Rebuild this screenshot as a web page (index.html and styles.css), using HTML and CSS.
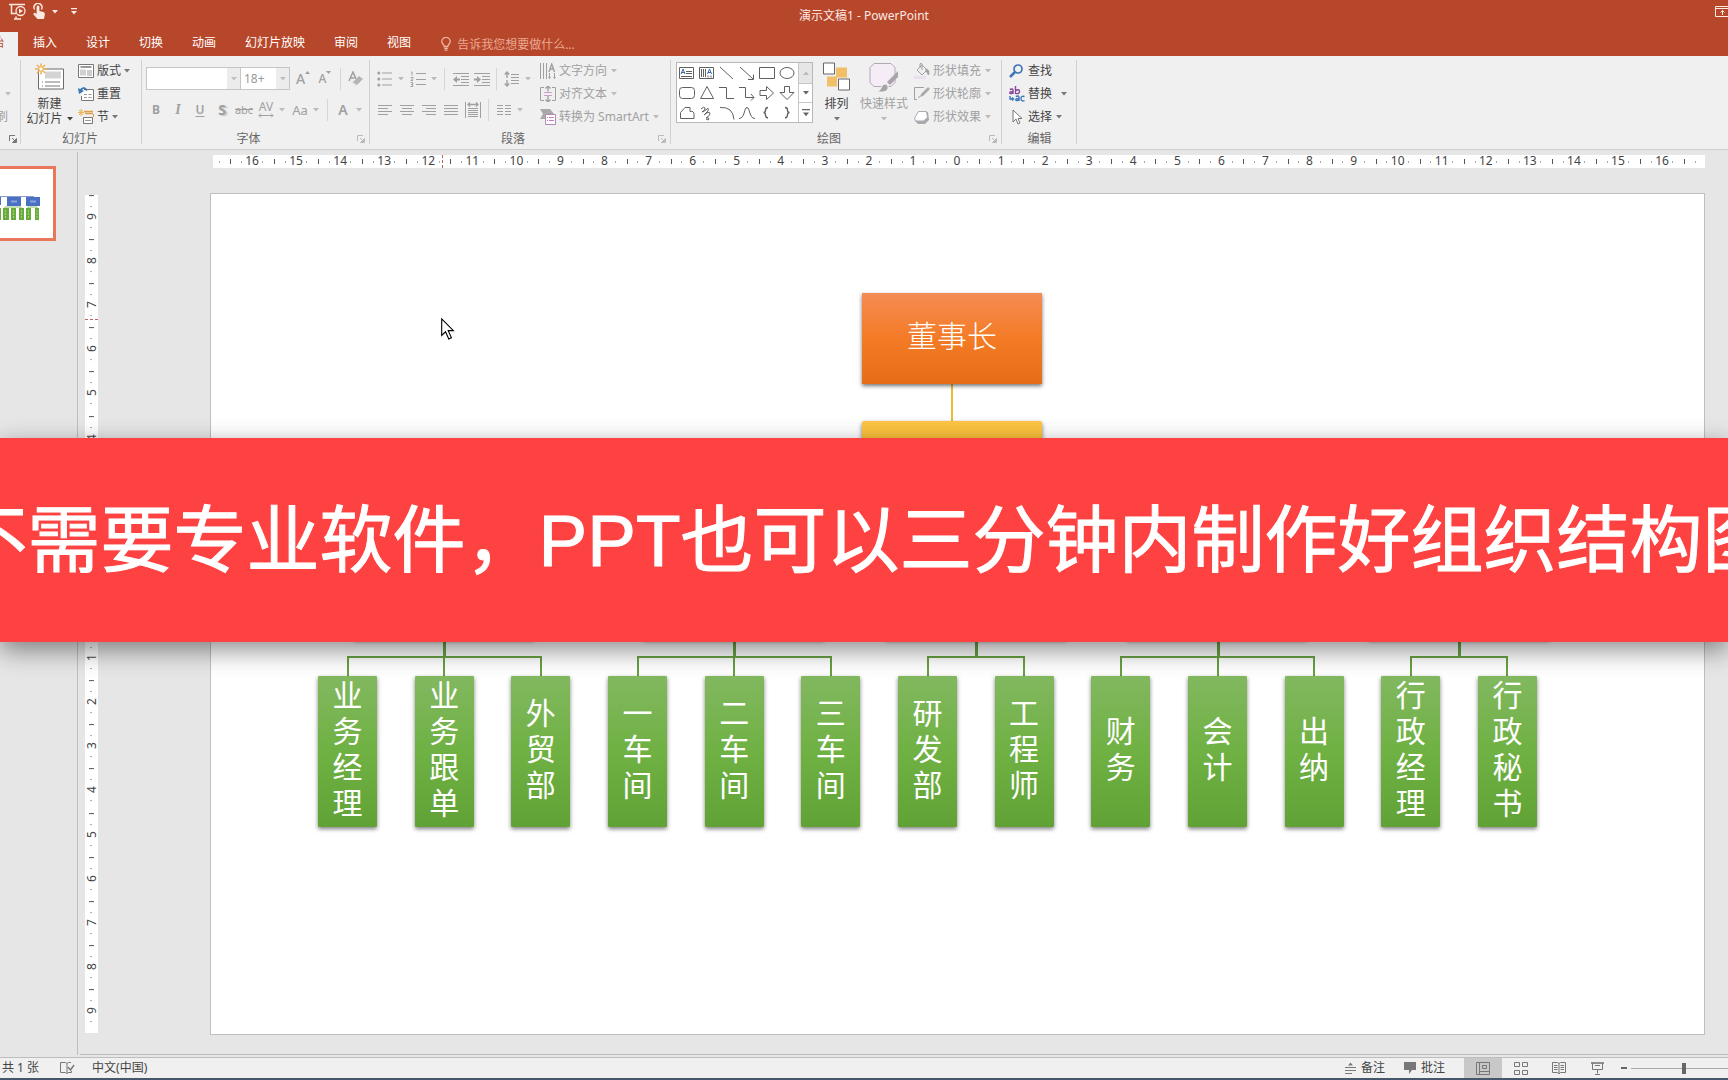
FILE: index.html
```html
<!DOCTYPE html>
<html lang="zh-CN">
<head>
<meta charset="utf-8">
<title>演示文稿1 - PowerPoint</title>
<link rel="stylesheet" href="styles.css">
</head>
<body>
<svg class="defs" aria-hidden="true">
  <symbol id="caret" viewBox="0 0 6 4"><path d="M0 0h6L3 3.5z" fill="currentColor"/></symbol>
  <symbol id="launch" viewBox="0 0 8 8"><path d="M.5 6V.5H6M3 3l3 3M7.500 3.500v4h-4z" fill="none" stroke="currentColor"/><path d="M7.500 3.500v4h-4z" fill="currentColor"/></symbol>
</svg>

<header class="top">
  <div class="titlebar">
    <div class="quick">
      <button class="q show" aria-label="从头开始"><svg width="17" height="17" viewBox="0 0 17 17" fill="none" stroke="currentColor"><path d="M0 1.500h16M2.500 1.500v9H7M5 16h7M7 13.500v2" stroke-width="1.500"/><circle cx="11.500" cy="8" r="4.500" stroke-width="1.300"/><path d="M10 5.500v5l4-2.500z" fill="currentColor" stroke="none"/></svg></button>
      <button class="q touch" aria-label="触摸模式"><svg width="12" height="17" viewBox="0 0 12 17"><path d="M1.600 6.500A4 4 0 1 1 8.400 6.500" fill="none" stroke="currentColor" stroke-width="1.400"/><path d="M3.600 3.500q1.400-1.800 2.800 0V8l4 1q1.600.5 1.500 2.200L11 16H4.500L.3 11.200q.5-1.800 2-1.200l1.300 1z" fill="currentColor"/></svg></button>
      <button class="q more" aria-label="更多触摸选项"><svg width="6" height="4"><use href="#caret"/></svg></button>
      <button class="q more" aria-label="自定义快速访问工具栏"><svg width="6" height="7" viewBox="0 0 6 7"><path d="M0 0h6v1.200H0zM0 3h6L3 6.500z" fill="currentColor"/></svg></button>
    </div>
    <h1 class="title">演示文稿1 - PowerPoint</h1>
    <button class="q options" aria-label="功能区显示选项"><svg width="16" height="11" viewBox="0 0 16 11" fill="none" stroke="currentColor"><path d="M.5.5h15v10H.5zM.5 2.500h15M7.500 9V4.500M5.500 6.500l2-2 2 2"/></svg></button>
  </div>
  <nav class="tabs">
    <button class="tab active">开始</button>
    <button class="tab">插入</button>
    <button class="tab">设计</button>
    <button class="tab">切换</button>
    <button class="tab">动画</button>
    <button class="tab">幻灯片放映</button>
    <button class="tab">审阅</button>
    <button class="tab">视图</button>
    <label class="tell">
      <svg width="10" height="14" viewBox="0 0 10 14" fill="none" stroke="currentColor" stroke-width="1.300"><path d="M3.200 9.500C3.200 7.500.8 7 .8 4.600a4.200 4.200 0 0 1 8.400 0C9.200 7 6.800 7.500 6.800 9.500zM3.200 11.300h3.600M3.500 13.200h3"/></svg>
      <input type="text" placeholder="告诉我您想要做什么..." aria-label="告诉我您想要做什么">
    </label>
  </nav>
</header>

<div class="ribbon">
  <section class="group clip">
    <div class="body stack">
      <span class="line"></span>
      <button class="line off" aria-label="复制"><svg class="c" width="6" height="4"><use href="#caret"/></svg></button>
      <button class="line off">格式刷</button>
    </div>
    <div class="foot"><button class="launcher" aria-label="剪贴板设置"><svg width="8" height="8"><use href="#launch"/></svg></button></div>
  </section>

  <section class="group slides">
    <div class="body">
      <button class="big">
        <svg width="32" height="29" viewBox="0 0 32 29"><path d="M4.500 6.500h25v20h-25z" fill="#fff" stroke="#6b6b6b"/><path d="M11 9h16v7H11z" fill="#d4d4d4"/><path d="M8 19.500h1M11 19.500h15M8 23.500h1M11 23.500h15" stroke="#777"/><path d="M7 1v11M1 6.500h12M3 2.500l8 8M11 2.500l-8 8" stroke="#edb45a" stroke-width="1.600"/><circle cx="7" cy="6.500" r="2.200" fill="#fff" stroke="#edb45a"/></svg>
        <span>新建</span><span class="withcaret">幻灯片<svg width="6" height="4"><use href="#caret"/></svg></span>
      </button>
      <div class="stack">
        <button class="line"><svg class="i" viewBox="0 0 16 16"><path d="M.5 1.500h15v13H.5z" fill="#fff" stroke="#777"/><path d="M2.500 4h11" stroke="#999" stroke-width="2"/><path d="M2 6.500h6v6H2z" fill="#d0d0d0"/><path d="M9 8h5M9 10h5M9 12h5" stroke="#999"/></svg>版式<svg class="c" width="6" height="4"><use href="#caret"/></svg></button>
        <button class="line"><svg class="i" viewBox="0 0 16 16"><path d="M6 3.500h9.500v11h-12V10" fill="#fff" stroke="#777"/><path d="M6 8.500h3M10.500 8.500h3M6 11.500h3M10.500 11.500h3" stroke="#999"/><path d="M9 4.500Q5-.5 2 5" fill="none" stroke="#3b78b0" stroke-width="2"/><path d="M0 2l1 6 5-3z" fill="#3b78b0"/></svg>重置</button>
        <button class="line"><svg class="i" viewBox="0 0 16 16"><path d="M6 2.500h9M15 4.500H7" stroke="#dca04a" stroke-width="1.500"/><path d="M5.500 8.500h9v6h-9z" fill="#fff" stroke="#777"/><path d="M7 11.500h6" stroke="#999"/><path d="M15.500 5v3" stroke="#dca04a"/><path d="M3 0v7M0 3.500h6M1 1l4 5M5 1L1 6" stroke="#edb45a"/></svg>节<svg class="c" width="6" height="4"><use href="#caret"/></svg></button>
      </div>
    </div>
    <div class="foot"><h2>幻灯片</h2></div>
  </section>

  <section class="group font off">
    <div class="body rows">
      <div class="row">
        <div class="combo name"><input type="text" aria-label="字体"><button aria-label="选择字体"><svg width="6" height="4"><use href="#caret"/></svg></button></div>
        <div class="combo size"><input type="text" value="18+" aria-label="字号"><button aria-label="选择字号"><svg width="6" height="4"><use href="#caret"/></svg></button></div>
        <button class="tool grow" aria-label="增大字号">A<svg width="5" height="3" viewBox="0 0 5 3"><path d="M0 3h5L2.500 0z" fill="currentColor"/></svg></button>
        <button class="tool shrink" aria-label="减小字号">A<svg width="5" height="3" viewBox="0 0 5 3"><path d="M0 0h5L2.500 3z" fill="currentColor"/></svg></button>
        <i class="sep"></i>
        <button class="tool" aria-label="清除格式"><svg class="i" viewBox="0 0 16 16"><path d="M1 10L5 1l3 7M2.500 7h4" fill="none" stroke="currentColor" stroke-width="1.500"/><path d="M5 11l6-6 4 3-6 6z" fill="#b5b5b5"/><path d="M4 10.500l4 4" stroke="#ccc"/></svg></button>
      </div>
      <div class="row">
        <button class="tool b">B</button><button class="tool it">I</button><button class="tool u">U</button><button class="tool s">S</button><button class="tool abc">abc</button>
        <button class="tool split av" aria-label="字符间距"><span class="cell">AV<svg width="16" height="5" viewBox="0 0 16 5" fill="none" stroke="currentColor"><path d="M1 2.500h14M3 .5l-2 2 2 2M13 .5l2 2-2 2"/></svg></span><svg class="c" width="6" height="4"><use href="#caret"/></svg></button>
        <button class="tool split aa"><span class="cell">Aa</span><svg class="c" width="6" height="4"><use href="#caret"/></svg></button>
        <i class="sep"></i>
        <button class="tool split color"><span class="cell">A</span><svg class="c" width="6" height="4"><use href="#caret"/></svg></button>
      </div>
    </div>
    <div class="foot"><h2>字体</h2><button class="launcher" aria-label="字体设置"><svg width="8" height="8"><use href="#launch"/></svg></button></div>
  </section>

  <section class="group para off">
    <div class="body">
      <div class="rows">
        <div class="row">
          <button class="tool split" aria-label="项目符号"><span class="cell"><svg class="i" viewBox="0 0 16 16" fill="currentColor"><path d="M5 1.500h10v1H5zM5 7.500h10v1H5zM5 13.500h10v1H5z"/><circle cx="1.800" cy="2" r="1.500"/><circle cx="1.800" cy="8" r="1.500"/><circle cx="1.800" cy="14" r="1.500"/></svg></span><svg class="c" width="6" height="4"><use href="#caret"/></svg></button>
          <button class="tool split" aria-label="编号"><span class="cell"><svg class="i" viewBox="0 0 16 16" fill="none" stroke="currentColor"><path d="M6 2.500h10M6 8.500h10M6 13.500h10M1 1h1v3.500M.5 6.500H3v1.200L.8 9.500H3M.5 11.500h2.200v4H.5M1 13.500h1.500"/></svg></span><svg class="c" width="6" height="4"><use href="#caret"/></svg></button>
          <i class="sep wide"></i>
          <button class="tool" aria-label="减少缩进"><svg class="i" viewBox="0 0 16 16"><path d="M0 2.500h16M8 5.500h8M8 8.500h8M8 11.500h8M0 14.500h16" stroke="currentColor"/><path d="M0 8.500L4 5v2.500h3v2H4V12z" fill="currentColor"/></svg></button>
          <button class="tool" aria-label="增加缩进"><svg class="i" viewBox="0 0 16 16"><path d="M0 2.500h16M8 5.500h8M8 8.500h8M8 11.500h8M0 14.500h16" stroke="currentColor"/><path d="M7 8.500L3 5v2.500H0v2h3V12z" fill="currentColor"/></svg></button>
          <i class="sep"></i>
          <button class="tool split" aria-label="行距"><span class="cell"><svg class="i" viewBox="0 0 16 16" fill="none" stroke="currentColor"><path d="M7 3.500h8M7 6.500h8M7 9.500h8M7 12.500h8"/><path d="M3 7V1M.8 3.500L3 1l2.200 2.500M3 9v6M.8 12.500L3 15l2.200-2.500" stroke-width="1.400"/></svg></span><svg class="c" width="6" height="4"><use href="#caret"/></svg></button>
        </div>
        <div class="row">
          <button class="tool" aria-label="左对齐"><svg class="i" viewBox="0 0 16 16" stroke="currentColor"><path d="M1 3.500h14M1 6.500h10M1 9.500h14M1 12.500h10"/></svg></button>
          <button class="tool" aria-label="居中"><svg class="i" viewBox="0 0 16 16" stroke="currentColor"><path d="M1 3.500h14M3 6.500h10M1 9.500h14M3 12.500h10"/></svg></button>
          <button class="tool" aria-label="右对齐"><svg class="i" viewBox="0 0 16 16" stroke="currentColor"><path d="M1 3.500h14M5 6.500h10M1 9.500h14M5 12.500h10"/></svg></button>
          <button class="tool" aria-label="两端对齐"><svg class="i" viewBox="0 0 16 16" stroke="currentColor"><path d="M1 3.500h14M1 6.500h14M1 9.500h14M1 12.500h14"/></svg></button>
          <button class="tool" aria-label="分散对齐"><svg class="i" viewBox="0 0 16 16" fill="none" stroke="currentColor"><path d="M.5 0v16M15.500 0v16M3 6.500h10M3 8.500h10M3 10.500h10M3 12.500h10M3 14.500h10"/><path d="M3 2.500h10M5 .5l-2 2 2 2M11 .5l2 2-2 2" stroke-width="1.300"/></svg></button>
          <i class="sep"></i>
          <button class="tool split" aria-label="分栏"><span class="cell"><svg class="i" viewBox="0 0 16 16" stroke="currentColor"><path d="M1 3.500h6M1 6.500h6M1 9.500h6M1 12.500h6M9 3.500h6M9 6.500h6M9 9.500h6M9 12.500h6"/></svg></span><svg class="c" width="6" height="4"><use href="#caret"/></svg></button>
        </div>
      </div>
      <div class="stack">
        <button class="line"><svg class="i" viewBox="0 0 16 16" fill="none" stroke="currentColor"><path d="M.5 0v16M3.500 0v16M6.500 0v16M9.500 10v5M14.500 10v5M8.500 14l1 1.500 1-1.500M13.500 14l1 1.500 1-1.500"/><path d="M9 9l2.700-8L14.500 9M10 6h4" stroke-width="1.400"/></svg>文字方向<svg class="c" width="6" height="4"><use href="#caret"/></svg></button>
        <button class="line"><svg class="i" viewBox="0 0 16 16" fill="none" stroke="currentColor"><path d="M4 1.500H.5v13H4M12 1.500h3.500v13H12"/><path d="M8 5.500V0M5.500 2.500L8 0l2.500 2.500M8 10v6M5.500 13.500L8 16l2.500-2.500" stroke-width="1.400"/><path d="M4 6.500h8M4 9.500h8" stroke="#c9a0c9"/></svg>对齐文本<svg class="c" width="6" height="4"><use href="#caret"/></svg></button>
        <button class="line"><svg class="i" viewBox="0 0 16 16"><path d="M0 0h10l4 5H5.500v5H0l3-5z" fill="#a9a9a9"/><path d="M5.500 5.500h10v10h-10z" fill="#fff" stroke="#b08ab0"/><path d="M7 8.500h1M9 8.500h5M7 11.500h1M9 11.500h5" stroke="#c080c0"/></svg>转换为 SmartArt<svg class="c" width="6" height="4"><use href="#caret"/></svg></button>
      </div>
    </div>
    <div class="foot"><h2>段落</h2><button class="launcher" aria-label="段落设置"><svg width="8" height="8"><use href="#launch"/></svg></button></div>
  </section>

  <section class="group draw">
    <div class="body">
      <div class="gallery">
        <svg class="shapes" width="121" height="59" viewBox="0 0 121 59" fill="none" stroke="#606060">
          <path d="M2.500 4.500h14v11h-14zM9 8.500h6M9 10.500h6M4 13.500h11"/><path d="M4 11l2-5 2 5M5 9.500h2.500" stroke="#356ba5"/>
          <path d="M22.500 4.500h14v11h-14zM24.500 6v8M26.500 6v8M28.500 6v8M31 12.500v2M34 12.500v2"/><path d="M30.500 11l2-5 2 5M31 9.500h3" stroke="#356ba5"/>
          <path d="M43 4l13 12M63 4l13 12M76.500 11.500v5H71"/>
          <path d="M82.500 4.500h15v11h-15z"/><ellipse cx="110" cy="10" rx="7" ry="5.500"/>
          <rect x="2.500" y="24.500" width="15" height="11" rx="3"/><path d="M30 23.500l6.500 12h-13z"/>
          <path d="M42 24.500h7.500v11H57M62 24.500h6.500v10H77M74 31l3 3.500-3 3"/>
          <path d="M83 27.500h6.500v-4l7 6.500-7 6.500v-4H83zM107.500 23.500h5v6h4.500l-7 7-7-7h4.500z"/>
          <path d="M3.500 55.500v-6L8 44.500h5v4q4-1 4 3v4z"/><path d="M24 46q3-3 4-1t-3 4q3-1 5-3t1 2l-4 4q5-4 6-2t-4 5q3-1 3 1t-3 0"/>
          <path d="M43 44.500q13-1 14 12M62 55.500c6 0 5-11 8-11s2 11 8 11"/>
          <path d="M91 44.500q-2.500 0-2.500 2.500t-2 2.500q2 0 2 2.500t2.500 3M108 44.500q2.500 0 2.500 2.500t2 2.500q-2 0-2 2.500t-2.500 3" stroke-width="1.300"/>
        </svg>
        <div class="scroll">
          <button class="dis" aria-label="上一行"><svg width="6" height="4" viewBox="0 0 6 4"><path d="M0 4h6L3 .5z" fill="currentColor"/></svg></button>
          <button aria-label="下一行"><svg width="6" height="4"><use href="#caret"/></svg></button>
          <button aria-label="其他形状"><svg width="8" height="8" viewBox="0 0 8 8"><path d="M0 0h8v1.200H0zM1 3.500h6L4 7.200z" fill="currentColor"/></svg></button>
        </div>
      </div>
      <button class="big arrange">
        <svg width="28" height="29" viewBox="0 0 28 29"><path d="M13 5h11v10H13zM4 14h10v10H4z" fill="#f0bf68"/><path d="M.5.5h11v11H.5zM15.500 16.500h11v11h-11z" fill="#fff" stroke="#666"/></svg>
        <span>排列</span><svg width="6" height="4"><use href="#caret"/></svg>
      </button>
      <button class="big off">
        <svg width="30" height="30" viewBox="0 0 30 30"><path d="M5 1.500h17l4 4v15l-4 4H5l-4-4v-15z" fill="#f5ecf7" stroke="#b3a6b6" stroke-linejoin="round"/><path d="M29 9v6l-8 8-3-3z" fill="#a5a5a5"/><path d="M8 30q4-2 5-6 3-4 6 0 1 5-5 6z" fill="#a5a5a5" stroke="#f0f0f0"/></svg>
        <span>快速样式</span><svg width="6" height="4"><use href="#caret"/></svg>
      </button>
      <div class="stack off">
        <button class="line"><svg class="i" viewBox="0 0 16 16" fill="none" stroke="currentColor"><path d="M0 13h12v3H0z" fill="#eadfee" stroke="none"/><path d="M3 7l5-5 5 5-5 5zM6 5V1q1-1.500 2 0v6"/><path d="M12 6q4 1 2.500 6Q13 9 12 8z" fill="currentColor"/></svg>形状填充<svg class="c" width="6" height="4"><use href="#caret"/></svg></button>
        <button class="line"><svg class="i" viewBox="0 0 16 16" fill="none" stroke="currentColor"><path d="M10 1.500H.5v12H3M4 11h2"/><path d="M14 1l2 2-7 7-3 1 1-3z" fill="#aaa" stroke="none"/></svg>形状轮廓<svg class="c" width="6" height="4"><use href="#caret"/></svg></button>
        <button class="line"><svg class="i" viewBox="0 0 16 16"><path d="M5 4l9-1 1 8-4 4H4L1 12z" fill="#aaa"/><path d="M4.500 2.500h8l1 6-4 3.500h-8l-1-3z" fill="#fff" stroke="#b0a6b4"/></svg>形状效果<svg class="c" width="6" height="4"><use href="#caret"/></svg></button>
      </div>
    </div>
    <div class="foot"><h2>绘图</h2><button class="launcher dim" aria-label="绘图设置"><svg width="8" height="8"><use href="#launch"/></svg></button></div>
  </section>

  <section class="group edit">
    <div class="body stack">
      <button class="line"><svg class="i" viewBox="0 0 16 16" fill="none" stroke="#3d75b8"><circle cx="9" cy="6" r="4" stroke-width="1.700"/><path d="M6 9l-5 5" stroke-width="2.500"/></svg>查找</button>
      <button class="line replace"><svg class="i" viewBox="0 0 16 16" fill="none" stroke-width="1.400"><path d="M.8 3.500q3.200-1.500 3.200 1V8M4 5.500q-3.500 0-3.200 1.400T4 6.800M6.500 0v8M6.500 4.500q4-2 4 1t-4 1.800" stroke="#85459a"/><path d="M6.800 10.500q3.200-1.500 3.200 1V15M10 12.500q-3.500 0-3.200 1.400T10 13.800M15.500 10.500q-3.500-1-3.500 2t3.500 2.200M1 10v3h3M3 11.500L4.500 13 3 14.500" stroke="#3d75b8"/></svg>替换<svg class="c" width="6" height="4"><use href="#caret"/></svg></button>
      <button class="line"><svg class="i" viewBox="0 0 16 16"><path d="M4 1v12l3-3 2 5 2-1-2-4.500h4z" fill="#fff" stroke="#777"/></svg>选择<svg class="c" width="6" height="4"><use href="#caret"/></svg></button>
    </div>
    <div class="foot"><h2>编辑</h2></div>
  </section>
</div>

<main class="work">
  <aside class="pane">
    <button class="thumb" aria-label="幻灯片 1">
      <svg width="53" height="69" viewBox="0 0 53 69"><path d="M0 27.500h34" stroke="#8a9bd0"/><g fill="#4a70c4"><path d="M0 28h1v8H0zM7 28h14v9H7zM26 28h14v9H26z"/></g><path d="M11 32.500h6M30 32.500h6" stroke="#8ba4e0" stroke-width="2"/><path d="M5 40v-2h16v2M28 40v-2h9v2" fill="none" stroke="#8cbf70"/><g fill="#67ab3c"><path d="M0 39h1v12H0zM3 39h6v12H3zM11 39h5v12h-5zM19 39h5v12h-5zM26 39h5v12h-5zM35 39h4v12h-4z"/></g><path d="M5.500 41v8M13.500 41v8M21.500 41v8M28.500 41v8M37 41v8" stroke="#9fd07c" stroke-dasharray="2 1"/></svg>
    </button>
  </aside>
  <section class="editor">
    <div class="hruler">
      <span>16</span><span>15</span><span>14</span><span>13</span><span>12</span><span>11</span><span>10</span><span>9</span><span>8</span><span>7</span><span>6</span><span>5</span><span>4</span><span>3</span><span>2</span><span>1</span><span>0</span><span>1</span><span>2</span><span>3</span><span>4</span><span>5</span><span>6</span><span>7</span><span>8</span><span>9</span><span>10</span><span>11</span><span>12</span><span>13</span><span>14</span><span>15</span><span>16</span>
      <i class="mark"></i>
    </div>
    <div class="vruler">
      <span>9</span><span>8</span><span>7</span><span>6</span><span>5</span><span>4</span><span></span><span></span><span></span><span></span><span>1</span><span>2</span><span>3</span><span>4</span><span>5</span><span>6</span><span>7</span><span>8</span><span>9</span>
      <i class="mark"></i>
    </div>
    <div class="slide">
      <div class="chart">
        <svg class="links" width="1219" height="534" viewBox="0 0 1219 534" fill="none">
          <path d="M634 90v40" stroke="#e9bd35" stroke-width="2"/>
          <g stroke="#68a042" stroke-width="2"><path d="M30 384v-20h193v20M126 364v20M320 384v-20h193v20M416 364v20M610 384v-20h96v20M803 384v-20h193v20M900 364v20M1093 384v-20h96v20"/><path d="M126.500 340v24M416.500 340v24M658.500 340v24M900.500 340v24M1141.500 340v24" stroke-width="3"/></g>
        </svg>
        <div class="node chief">董事长</div>
        <div class="node second"></div>
        <div class="node dept d1"></div><div class="node dept d2"></div><div class="node dept d3"></div><div class="node dept d4"></div><div class="node dept d5"></div>
        <div class="leaves">
          <div class="leaf"><p>业务经理</p></div><div class="leaf"><p>业务跟单</p></div><div class="leaf"><p>外贸部</p></div><div class="leaf"><p>一车间</p></div><div class="leaf"><p>二车间</p></div><div class="leaf"><p>三车间</p></div><div class="leaf"><p>研发部</p></div><div class="leaf"><p>工程师</p></div><div class="leaf"><p>财务</p></div><div class="leaf"><p>会计</p></div><div class="leaf"><p>出纳</p></div><div class="leaf"><p>行政经理</p></div><div class="leaf"><p>行政秘书</p></div>
        </div>
      </div>
      <svg class="pointer" width="14" height="22" viewBox="0 0 14 22"><path d="M.7.900v16.600l3.800-3.700 3.300 7.200 2.600-1.200L7.200 12.600h5.200z" fill="#fff" stroke="#000" stroke-width="1.100"/></svg>
    </div>
  </section>
</main>

<footer class="status">
  <div class="left">
    <span>共 1 张</span>
    <button class="spell" aria-label="拼写检查"><svg width="15" height="13" viewBox="0 0 15 13" fill="none" stroke="currentColor"><path d="M6.500 11.500l-1-1h-5V.5h5l1.500 1V12M7 1.500l1.500-1H11M7 11.500l1-1h3.500V9"/><path d="M8 5l2.500 3L14 3" stroke-width="1.400"/></svg></button>
    <span>中文(中国)</span>
  </div>
  <div class="right">
    <button class="sb"><svg width="11" height="12" viewBox="0 0 11 12"><path d="M0 5.500h11M0 8.500h11M0 11.500h7" stroke="currentColor"/><path d="M3 3.500h5L5.500.5z" fill="currentColor"/></svg>备注</button>
    <button class="sb"><svg width="12" height="12" viewBox="0 0 12 12"><path d="M0 0h12v8H8l-3 4V8H0z" fill="currentColor"/></svg>批注</button>
    <button class="view on" aria-label="普通视图"><svg width="14" height="13" viewBox="0 0 14 13" fill="none" stroke="currentColor"><path d="M.5.500h13v12H.5zM3.500.500v12M3.500 9.500h10M6.500 3.500h4v3h-4z"/></svg></button>
    <button class="view" aria-label="幻灯片浏览"><svg width="14" height="13" viewBox="0 0 14 13" fill="none" stroke="currentColor"><path d="M.5.500h5v4h-5zM8.500.500h5v4h-5zM.5 8.500h5v4h-5zM8.500 8.500h5v4h-5z"/></svg></button>
    <button class="view" aria-label="阅读视图"><svg width="14" height="13" viewBox="0 0 14 13" fill="none" stroke="currentColor"><path d="M7 1.500l-1.500-1h-5v10h5l1.500 1.500 1.500-1.500h5V.500h-5zV12M2 3.500h3.500M2 5.500h3.500M2 7.500h3.500M8.500 3.500H12M8.500 5.500H12M8.500 7.500H12"/></svg></button>
    <button class="view" aria-label="幻灯片放映视图"><svg width="13" height="13" viewBox="0 0 13 13" fill="none" stroke="currentColor"><path d="M0 1h13" stroke-width="1.600"/><path d="M1.500 1v6.500h10V1M4 3.500h5M6.500 7.500v4M4 12.500h5"/></svg></button>
    <button class="minus" aria-label="缩小"></button>
    <input class="zoom" type="range" min="0" max="100" value="50" aria-label="缩放">
  </div>
</footer>

<div class="banner"><p>不需要专业软件，PPT也可以三分钟内制作好组织结构图</p></div>
</body>
</html>
```
FILE: styles.css
```css
* { box-sizing: border-box; }
body {
  margin: 0;
  height: 100vh;
  display: flex;
  flex-direction: column;
  overflow: hidden;
  position: relative;
  background: #e6e6e6;
  color: #444;
  font: 12px/16px "Noto Sans", "Noto Sans CJK SC", sans-serif;
}
button, input { font: inherit; color: inherit; border: 0; padding: 0; margin: 0; background: none; }
button { display: flex; align-items: center; justify-content: center; white-space: nowrap; }
svg { display: block; flex: none; }
h1, h2, p { margin: 0; font-size: inherit; font-weight: 400; }
.defs { position: absolute; width: 0; height: 0; }

/* Title bar and tabs */
.top { background: #b7472a; color: #fff; height: 56px; flex: none; display: flex; flex-direction: column; }
.titlebar { height: 32px; display: grid; grid-template-columns: 1fr auto 1fr; align-items: center; }
.quick { display: flex; align-items: center; padding: 0 0 9px 9px; }
.q { color: #fbe9e4; }
.touch { margin-left: 7px; }
.more { width: 19px; height: 16px; }
.options { justify-self: end; margin: 0 -3px 10px 0; }
.title { color: #fbe9e4; }
.tabs { display: flex; height: 24px; gap: 1px; margin-left: -34px; }
.tab { padding: 0 14px 2px; }
.tab.active { background: #f0f0f0; color: #b7472a; }
.tell { display: flex; align-items: center; gap: 6px; margin-left: 15px; color: #f0b5a3; }
.tell input { width: 160px; height: 22px; }
.tell input::placeholder { color: #eaa793; opacity: 1; }

/* Ribbon */
.ribbon { display: flex; flex: none; height: 94px; background: #f0f0f0; border-bottom: 1px solid #cfcfcf; }
.group {
  flex: none;
  padding-top: 3px;
  display: flex;
  flex-direction: column;
  background: linear-gradient(#d2d2d2, #d2d2d2) right 4px / 1px 84px no-repeat;
}
.clip { width: 21px; overflow: hidden; }
.slides { width: 121px; }
.font { width: 228px; }
.para { width: 301px; }
.draw { width: 331px; }
.edit { width: 75px; }
.off { color: #a0a0a0; }
.body { height: 70px; display: flex; }
.foot { height: 20px; display: flex; align-items: center; padding-right: 3px; color: #666; }
.foot h2 { flex: 1; text-align: center; }
.launcher { width: 12px; color: #777; }
.off .launcher, .launcher.dim { color: #bbb; }
.clip .foot { justify-content: flex-end; padding-right: 2px; }
.clip .body { align-items: flex-end; padding-right: 13px; }
.clip .line { padding: 0; }
.clip .c { margin: 0 -3px 0 0; }
.stack { display: flex; flex-direction: column; }
.line { height: 23px; justify-content: flex-start; padding-left: 6px; }
.i { width: 16px; height: 16px; }
.line .i { margin-right: 3px; }
.c { color: #777; margin-left: 4px; }
.off .c { color: #bbb; }
.big { flex-direction: column; justify-content: flex-start; line-height: 15px; }
.big > svg:first-child { margin: 3px 0 4px; height: 30px; }
.big > svg:last-child { margin-top: 6px; color: #777; }
.off.big > svg:last-child { color: #bbb; }
.withcaret { display: flex; align-items: center; gap: 4px; }
.slides .big { width: 51px; padding-left: 6px; }
.slides .c { margin-left: 3px; }
.rows { flex-direction: column; }
.row { display: flex; align-items: center; height: 31px; }
.rows .row:first-child { margin-top: 4px; }
.font .rows { padding-left: 3px; }
.para .body { padding-left: 4px; }
.para .rows { width: 160px; }
.tool { width: 22px; height: 22px; }
.split { width: 34px; justify-content: flex-start; }
.split .c { margin-left: 2px; }
.cell { width: 22px; display: flex; flex-direction: column; align-items: center; }
.sep { width: 9px; height: 22px; background: linear-gradient(#d6d6d6, #d6d6d6) center / 1px 100% no-repeat; }
.sep.wide { width: 11px; }
.combo { display: flex; height: 23px; border: 1px solid #c6c6c6; background: #fff; }
.combo input { flex: 1; min-width: 0; padding-left: 3px; color: #999; }
.combo button { width: 13px; background: #ececec; color: #c0c0c0; }
.combo.name { width: 95px; margin-left: 1px; }
.combo.size { width: 49px; border-left: 0; }
.grow { font-size: 14px; font-weight: 500; margin-left: 2px; }
.shrink { font-size: 12px; font-weight: 500; }
.grow svg, .shrink svg { align-self: flex-start; margin-top: 3px; }
.b, .s { font-weight: 700; }
.it { font-family: "Liberation Serif", serif; font-style: italic; font-weight: 700; font-size: 14px; }
.u { text-decoration: underline; text-underline-offset: 2px; font-weight: 600; }
.s { text-shadow: 2px 1px 1px #c4c4c4; font-size: 14px; }
.abc { text-decoration: line-through; font-size: 11px; }
.av .cell { line-height: 12px; }
.aa { font-size: 13px; }
.color { font-size: 14px; font-weight: 600; }
.gallery { display: flex; width: 137px; height: 61px; margin: 3px 0 0 5px; border: 1px solid #b8b8b8; background: #fff; }
.scroll { width: 14px; display: grid; grid-template-rows: repeat(3, 1fr); border-left: 1px solid #c6c6c6; color: #666; }
.scroll button + button { border-top: 1px solid #c6c6c6; }
.scroll .dis { background: #e6e6e6; color: #bbb; }
.draw .big { width: 50px; }
.draw .big.arrange { width: 45px; margin-left: 1px; }
.draw .stack { margin-left: -1px; }
.draw .stack .line { padding-left: 6px; }
.edit .stack { padding-left: 1px; }
.replace .c { margin-left: 9px; }
.edit .foot { padding: 0; }

/* Work area */
.work { flex: 1; min-height: 0; display: flex; }
.pane { width: 78px; border-right: 1px solid #bdbdbd; margin: 2px 0; padding-top: 14px; }
.thumb { width: 56px; height: 75px; background: #fff; border: 3px solid #e9775c; border-left: 0; }
.editor {
  flex: 1;
  min-width: 0;
  margin: 0 0 2px 2px;
  border-bottom: 1px solid #bdbdbd;
  padding: 5px 23px 19px 5px;
  display: grid;
  grid-template: 13px 1fr / 13px 1fr;
  gap: 25px 112px;
}
.hruler, .vruler { position: relative; display: flex; background-color: #fff; }
.hruler { grid-column: 2; margin-left: 3px; }
.hruler::before, .hruler::after { content: ""; flex: none; background: linear-gradient(#aaa, #aaa) 6px 6px / 1px 2px no-repeat; }
.hruler::before { width: 17px; }
.hruler::after { width: 21px; background: linear-gradient(#555, #555) 0 4px / 1px 5px no-repeat, linear-gradient(#aaa, #aaa) 11px 6px / 1px 2px no-repeat; }
.hruler span {
  flex: 1;
  text-align: center;
  line-height: 12px;
  background:
    linear-gradient(#555, #555) 0 4px / 1px 5px no-repeat,
    linear-gradient(#aaa, #aaa) 25% 6px / 1px 2px no-repeat,
    linear-gradient(#aaa, #aaa) 75% 6px / 1px 2px no-repeat;
}
.vruler { flex-direction: column; margin: 2px 0; }
.vruler span {
  flex: 1;
  line-height: 13px;
  text-align: center;
  writing-mode: vertical-rl;
  transform: rotate(180deg);
  background:
    linear-gradient(#555, #555) 4px 100% / 5px 1px no-repeat,
    linear-gradient(#aaa, #aaa) 6px 25% / 2px 1px no-repeat,
    linear-gradient(#aaa, #aaa) 6px 75% / 2px 1px no-repeat;
}
.mark { position: absolute; }
.hruler .mark { left: 229px; top: 0; height: 13px; border-left: 1px dashed #b86a5c; }
.vruler .mark { left: 0; top: 124px; width: 13px; border-top: 1px dashed #b86a5c; }
.slide { position: relative; background: #fff; border: 1px solid #bfbfbf; }

/* Organisation chart */
.chart { position: relative; width: 1219px; height: 534px; margin: 99px 0 0 107px; color: #fff; font: 300 30px/36px "Noto Sans CJK SC", sans-serif; }
.links { position: absolute; left: 0; top: 0; }
.node { position: absolute; width: 180px; height: 91px; display: flex; align-items: center; justify-content: center; padding-bottom: 9px; box-shadow: 0 2px 4px rgba(0, 0, 0, .55); }
.chief { left: 544px; top: 0; background: linear-gradient(#f58c54, #f47b26 50%, #e76c18); }
.second { left: 544px; top: 128px; background: linear-gradient(#fdc445, #eab300); border-radius: 2px; }
.dept { top: 255px; background: linear-gradient(#5f83cd, #3865bd); }
.d1 { left: 36px; }
.d2 { left: 326px; }
.d3 { left: 568px; }
.d4 { left: 809px; }
.d5 { left: 1051px; }
.leaves { position: absolute; left: 0; right: 0; bottom: 0; display: flex; justify-content: space-between; }
.leaf { width: 59px; height: 151px; display: flex; align-items: center; justify-content: center; padding-bottom: 9px; background: linear-gradient(#82b860, #6fb143 50%, #61a236); box-shadow: 0 2px 4px rgba(0, 0, 0, .5); border-radius: 1px; }
.leaf p { width: 30px; word-break: break-all; }
.pointer { position: absolute; left: 230px; top: 124px; }

/* Status bar */
.status { flex: none; height: 23px; display: flex; justify-content: space-between; background: #f0f0f0; border-top: 1px solid #bdbdbd; border-bottom: 2px solid #46566c; white-space: nowrap; }
.left, .right { display: flex; align-items: center; }
.left { padding-left: 2px; }
.spell { margin: 0 17px 0 21px; color: #777; }
.right { margin-right: -9px; }
.sb { gap: 5px; margin-right: 19px; }
.sb svg { color: #777; }
.view { width: 38px; height: 20px; color: #777; }
.view.on { background: #c8c8c8; }
.minus { width: 6px; height: 2px; background: #666; margin: 0 4px 0 5px; }
.zoom { appearance: none; width: 106px; height: 20px; background: linear-gradient(#a8a8a8, #a8a8a8) center / 100% 1px no-repeat; }
.zoom::-webkit-slider-thumb { appearance: none; width: 4px; height: 11px; background: #666; }

/* Caption laid over the recording */
.banner {
  position: absolute;
  inset: 0;
  margin: auto 0;
  height: 204px;
  display: flex;
  align-items: center;
  justify-content: center;
  padding: 2px 0 0 2px;
  overflow: hidden;
  background: #fe4242;
  color: #fff;
  white-space: nowrap;
  box-shadow: 0 8px 24px rgba(0, 0, 0, .45);
  font: 500 73px/100px "Liberation Sans", "Noto Sans CJK SC", sans-serif;
  -webkit-text-stroke: 1px #fff;
}
```
